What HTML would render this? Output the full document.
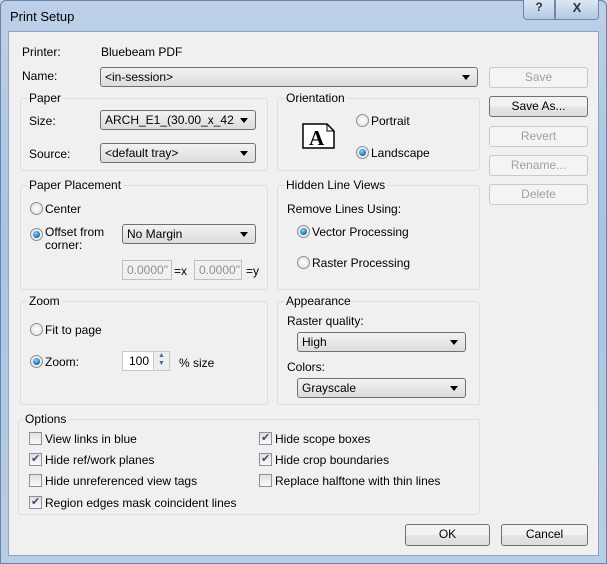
<!DOCTYPE html>
<html><head><meta charset="utf-8">
<style>
*{box-sizing:border-box;margin:0;padding:0}
body{width:607px;height:564px;overflow:hidden;background:#c9d8ea;font-family:"Liberation Sans",sans-serif;font-size:12px;color:#000;position:relative}
.frame{position:absolute;left:0;top:0;width:607px;height:564px;background:linear-gradient(180deg,#bcd0e8 0%,#a9c3e3 40%,#b8cde6 100%);border:1px solid #6b84a3;border-radius:6px 6px 0 0}
.title{position:absolute;left:10px;top:9px;font-size:13px;color:#000}
.client{position:absolute;left:8px;top:31px;width:591px;height:525px;background:#f0f0f0;border:1px solid #8ea4bf}
.a{position:absolute;white-space:nowrap}
.grp{position:absolute;border:1px solid #d5dfe5;border-radius:3px}
.gt{position:absolute;background:#f0f0f0;padding:0 2px;top:-8px;left:6px;line-height:14px}
.cb{position:absolute;border:1px solid #707070;border-radius:3px;background:linear-gradient(#f2f2f2,#dcdcdc);height:20px;padding-left:4px;line-height:18px;overflow:hidden;white-space:nowrap}
.cb span{display:block;overflow:hidden;margin-right:20px}
.cb:after{content:"";position:absolute;right:7px;top:7px;border-left:4px solid transparent;border-right:4px solid transparent;border-top:5px solid #000}
.btn{position:absolute;border:1px solid #acacac;border-radius:3px;background:linear-gradient(#f2f2f2 50%,#e5e5e5 50%,#dddddd);text-align:center;line-height:19px;height:21px}
.dis{color:#a0a0a0;border-color:#c8c8c8;background:#f4f4f4}
.def{border-color:#707070}
.r{position:absolute;width:13px;height:13px;border-radius:50%;border:1px solid #8f8f8f;background:radial-gradient(#fff,#dcdcdc)}
.r.on:after{content:"";position:absolute;left:2px;top:2px;width:7px;height:7px;border-radius:50%;background:radial-gradient(circle at 40% 35%,#8fd3ff,#0d6ea8 70%,#08466e)}
.c{position:absolute;width:13px;height:13px;border:1px solid #8f8f8f;background:linear-gradient(#e0e0e0,#fafafa)}
.c.on:after{content:"✔";position:absolute;left:1px;top:-2px;font-size:11px;color:#3a4d7a}
.tb{position:absolute;border:1px solid #c0c0c0;background:#f0f0f0;color:#909090;height:20px;line-height:18px;padding-left:4px;overflow:hidden}
</style></head><body>
<div class="frame"></div>
<div class="title">Print Setup</div>
<div class="a" style="left:523px;top:0;width:32px;height:20px;border:1px solid #6f87a8;border-top:none;border-radius:0 0 0 4px;background:linear-gradient(#dce7f4,#b4c8e2);text-align:center;font-size:12px;font-weight:bold;color:#333">?</div>
<div class="a" style="left:555px;top:0;width:44px;height:20px;border:1px solid #6f87a8;border-top:none;border-radius:0 0 4px 0;background:linear-gradient(#dce7f4,#b4c8e2);text-align:center;font-size:13px;font-weight:bold;color:#333">X</div>
<div class="client"></div>

<div class="a" style="left:22px;top:45px">Printer:</div>
<div class="a" style="left:101px;top:45px">Bluebeam PDF</div>
<div class="a" style="left:22px;top:69px">Name:</div>
<div class="cb" style="left:100px;top:67px;width:378px"><span>&lt;in-session&gt;</span></div>

<div class="btn dis" style="left:489px;top:67px;width:99px">Save</div>
<div class="btn def" style="left:489px;top:96px;width:99px">Save As...</div>
<div class="btn dis" style="left:489px;top:126px;width:99px">Revert</div>
<div class="btn dis" style="left:489px;top:155px;width:99px">Rename...</div>
<div class="btn dis" style="left:489px;top:184px;width:99px">Delete</div>

<div class="grp" style="left:20px;top:98px;width:248px;height:73px"><span class="gt">Paper</span></div>
<div class="a" style="left:29px;top:114px">Size:</div>
<div class="cb" style="left:100px;top:110px;width:156px"><span>ARCH_E1_(30.00_x_42.00_</span></div>
<div class="a" style="left:29px;top:147px">Source:</div>
<div class="cb" style="left:100px;top:143px;width:156px"><span>&lt;default tray&gt;</span></div>

<div class="grp" style="left:277px;top:98px;width:203px;height:73px"><span class="gt">Orientation</span></div>
<svg class="a" style="left:302px;top:123px" width="34" height="26"><path d="M1 1H25L32 8V25H1Z" fill="#fff" stroke="#000" stroke-width="1.5"/><path d="M25 1V8H32" fill="none" stroke="#000"/><text x="7" y="22" font-family="Liberation Serif" font-weight="bold" font-size="21">A</text></svg>
<div class="r" style="left:356px;top:114px"></div><div class="a" style="left:371px;top:114px">Portrait</div>
<div class="r on" style="left:356px;top:146px"></div><div class="a" style="left:371px;top:146px">Landscape</div>

<div class="grp" style="left:20px;top:185px;width:248px;height:105px"><span class="gt">Paper Placement</span></div>
<div class="r" style="left:30px;top:202px"></div><div class="a" style="left:45px;top:202px">Center</div>
<div class="r on" style="left:30px;top:228px"></div><div class="a" style="left:45px;top:226px;line-height:13px">Offset from<br>corner:</div>
<div class="cb" style="left:122px;top:224px;width:134px"><span>No Margin</span></div>
<div class="tb" style="left:122px;top:260px;width:50px">0.0000"</div><div class="a" style="left:174px;top:264px">=x</div>
<div class="tb" style="left:194px;top:260px;width:48px">0.0000"</div><div class="a" style="left:246px;top:264px">=y</div>

<div class="grp" style="left:277px;top:185px;width:203px;height:105px"><span class="gt">Hidden Line Views</span></div>
<div class="a" style="left:287px;top:202px">Remove Lines Using:</div>
<div class="r on" style="left:297px;top:225px"></div><div class="a" style="left:312px;top:225px">Vector Processing</div>
<div class="r" style="left:297px;top:256px"></div><div class="a" style="left:312px;top:256px">Raster Processing</div>

<div class="grp" style="left:20px;top:301px;width:248px;height:104px"><span class="gt">Zoom</span></div>
<div class="r" style="left:30px;top:323px"></div><div class="a" style="left:45px;top:323px">Fit to page</div>
<div class="r on" style="left:30px;top:355px"></div><div class="a" style="left:45px;top:355px">Zoom:</div>
<div class="a" style="left:122px;top:351px;width:48px;height:20px;border:1px solid #c8c8c8;background:#fff;padding-left:6px;line-height:18px">100</div>
<div class="a" style="left:153px;top:352px;width:16px;height:18px;border-left:1px solid #ccc;background:#eee;font-size:7px;color:#4a6a9a;text-align:center;line-height:8px">▲<br>▼</div>
<div class="a" style="left:179px;top:356px">% size</div>

<div class="grp" style="left:277px;top:301px;width:203px;height:104px"><span class="gt">Appearance</span></div>
<div class="a" style="left:287px;top:314px">Raster quality:</div>
<div class="cb" style="left:297px;top:332px;width:169px"><span>High</span></div>
<div class="a" style="left:287px;top:360px">Colors:</div>
<div class="cb" style="left:297px;top:378px;width:169px"><span>Grayscale</span></div>

<div class="grp" style="left:18px;top:419px;width:462px;height:96px"><span class="gt" style="left:4px">Options</span></div>
<div class="c" style="left:29px;top:432px"></div><div class="a" style="left:45px;top:432px">View links in blue</div>
<div class="c on" style="left:29px;top:453px"></div><div class="a" style="left:45px;top:453px">Hide ref/work planes</div>
<div class="c" style="left:29px;top:474px"></div><div class="a" style="left:45px;top:474px">Hide unreferenced view tags</div>
<div class="c on" style="left:29px;top:496px"></div><div class="a" style="left:45px;top:496px">Region edges mask coincident lines</div>
<div class="c on" style="left:259px;top:432px"></div><div class="a" style="left:275px;top:432px">Hide scope boxes</div>
<div class="c on" style="left:259px;top:453px"></div><div class="a" style="left:275px;top:453px">Hide crop boundaries</div>
<div class="c" style="left:259px;top:474px"></div><div class="a" style="left:275px;top:474px">Replace halftone with thin lines</div>

<div class="btn def" style="left:405px;top:524px;width:85px;height:22px">OK</div>
<div class="btn def" style="left:501px;top:524px;width:87px;height:22px">Cancel</div>
</body></html>
